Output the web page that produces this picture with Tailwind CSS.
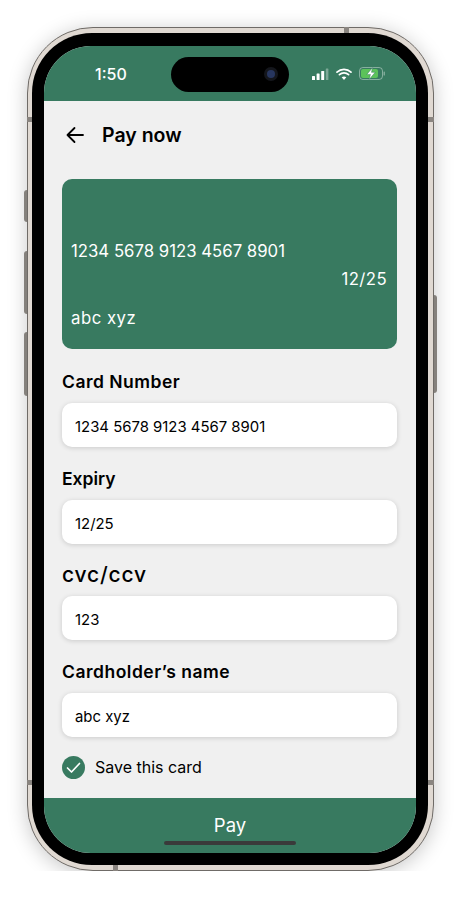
<!DOCTYPE html>
<html lang="en">
<head>
    <meta charset="UTF-8">
    <meta name="viewport" content="width=device-width, initial-scale=1.0">
    <title>Pay now</title>
    <script src="https://cdn.jsdelivr.net/npm/@tailwindcss/browser@4"></script>
</head>
<body class="bg-white font-['Inter',sans-serif] text-black">
    <div class="pt-[27px] pl-[27px]">
        <!-- Phone frame -->
        <div class="relative w-[407px] h-[844px] rounded-[66px] bg-[#e0d9d2] pt-[5px] pr-[5px] pb-[5px] pl-[4px] border border-[#6f6b67] shadow-[0_3px_20px_rgba(0,0,0,0.22)]">
            <!-- Side buttons -->
            <div class="absolute left-[-4px] top-[162px] w-[3px] h-[32px] bg-[#85817c] rounded-l-sm"></div>
            <div class="absolute left-[-4px] top-[223px] w-[3px] h-[63px] bg-[#85817c] rounded-l-sm"></div>
            <div class="absolute left-[-4px] top-[304px] w-[3px] h-[64px] bg-[#85817c] rounded-l-sm"></div>
            <div class="absolute right-[-4px] top-[267px] w-[3px] h-[98px] bg-[#85817c] rounded-r-sm"></div>
            <!-- Antenna bands -->
            <div class="absolute left-[-1px] top-[89px] w-[5px] h-[5px] bg-[#8a8580]"></div>
            <div class="absolute right-[-1px] top-[89px] w-[6px] h-[5px] bg-[#8a8580]"></div>
            <div class="absolute left-[-1px] top-[752px] w-[5px] h-[5px] bg-[#8a8580]"></div>
            <div class="absolute right-[-1px] top-[752px] w-[6px] h-[5px] bg-[#8a8580]"></div>
            <div class="absolute left-[316px] top-[-1px] w-[5px] h-[6px] bg-[#8a8580]"></div>
            <div class="absolute left-[85px] bottom-[-1px] w-[5px] h-[6px] bg-[#8a8580]"></div>

            <div class="h-full rounded-[60px] bg-black px-[12px] pt-[13px] pb-[12px]">
                <div class="relative flex h-full flex-col overflow-hidden rounded-[47px] bg-[#f0f0f0]">
                    <!-- Status bar -->
                    <div class="relative h-[55px] shrink-0 bg-[#387a60] text-white">
                        <span class="absolute left-[51px] top-[18px] text-[16px] leading-5 font-medium">1:50</span>
                        <div class="absolute left-[127px] top-[10.5px] flex h-[35px] w-[118px] items-center justify-end rounded-full bg-black pr-[11px]">
                            <div class="flex h-[14px] w-[14px] items-center justify-center rounded-full bg-[#14161c]">
                                <div class="h-[8px] w-[8px] rounded-full bg-[#27365f]"></div>
                            </div>
                        </div>
                        <div class="absolute left-[267px] top-[21px] flex items-center gap-[7px]">
                            <svg width="18" height="12" viewBox="0 0 18 12">
                                <rect x="1" y="8" width="3" height="4" rx="0.6" fill="#fff"/>
                                <rect x="5.6" y="5.5" width="3" height="6.5" rx="0.6" fill="#fff"/>
                                <rect x="10.2" y="3" width="3" height="9" rx="0.6" fill="#fff"/>
                                <rect x="14.8" y="0.5" width="2.6" height="11.5" rx="0.6" fill="#fff" fill-opacity="0.35"/>
                            </svg>
                            <svg width="16" height="12" viewBox="0 0 16 12">
                                <path d="M1 4.2C4.9.5 11.1.5 15 4.2" fill="none" stroke="#fff" stroke-width="1.7" stroke-linecap="round"/>
                                <path d="M3.4 6.7c2.6-2.4 6.6-2.4 9.2 0" fill="none" stroke="#fff" stroke-width="1.7" stroke-linecap="round"/>
                                <path d="M8 12 5.7 9.2c1.4-1.1 3.2-1.1 4.6 0z" fill="#fff"/>
                            </svg>
                            <svg width="26" height="13" viewBox="0 0 26 13">
                                <rect x="0.5" y="0.5" width="23" height="12" rx="3.4" fill="none" stroke="#fff" stroke-opacity="0.4"/>
                                <rect x="2" y="2" width="17" height="9" rx="2" fill="#5cc25a"/>
                                <rect x="24.6" y="4.5" width="1.2" height="4" rx="0.6" fill="#fff" fill-opacity="0.45"/>
                                <path d="M13.6 0.6 7.8 7.4h3.6l-1.2 5 6-7.1h-3.7z" fill="#fff" stroke="#387a60" stroke-width="0.5"/>
                            </svg>
                        </div>
                    </div>

                    <!-- Title row -->
                    <div class="flex h-[68px] shrink-0 items-center pl-[22px]">
                        <svg width="18" height="18" viewBox="0 0 18 18" fill="none" stroke="#000" stroke-width="1.8" stroke-linecap="round" stroke-linejoin="round">
                            <path d="M17 9H1.5M8.5 2 1.5 9l7 7"/>
                        </svg>
                        <h1 class="ml-[18px] text-[19.5px] leading-6 font-semibold">Pay now</h1>
                    </div>

                    <div class="flex-1 pl-[18px] pr-[19px] pt-[10px]">
                        <!-- Card preview -->
                        <div class="relative flex h-[170px] flex-col rounded-[10px] bg-[#387a60] pl-[9px] pr-[10px] text-[16.75px] text-white">
                            <span class="mt-[60px] leading-6">1234 5678 9123 4567 8901</span>
                            <span class="mt-[4px] self-end leading-6 tracking-[0.4px]">12/25</span>
                            <span class="mt-[15px] leading-6 tracking-[0.5px]">abc xyz</span>
                        </div>

                        <!-- Form -->
                        <form class="mt-[21px]">
                            <label class="block text-[17.5px] leading-6 font-semibold tracking-[0.5px]">Card Number</label>
                            <div class="mt-[9px] flex h-[44px] items-center rounded-[10px] bg-white pt-[4px] pl-[13px] text-[14.9px] shadow-[0_1px_5px_rgba(0,0,0,0.16)]">1234 5678 9123 4567 8901</div>

                            <label class="mt-[20px] block text-[17.5px] leading-6 font-semibold">Expiry</label>
                            <div class="mt-[9px] flex h-[44px] items-center rounded-[10px] bg-white pt-[4px] pl-[13px] text-[14.9px] shadow-[0_1px_5px_rgba(0,0,0,0.16)]">12/25</div>

                            <label class="mt-[19px] block text-[21px] leading-6 font-medium tracking-[0.8px]">cvc/ccv</label>
                            <div class="mt-[9px] flex h-[44px] items-center rounded-[10px] bg-white pt-[4px] pl-[13px] text-[14.9px] shadow-[0_1px_5px_rgba(0,0,0,0.16)]">123</div>

                            <label class="mt-[20px] block text-[17.5px] leading-6 font-semibold tracking-[0.5px]">Cardholder’s name</label>
                            <div class="mt-[9px] flex h-[44px] items-center rounded-[10px] bg-white pt-[4px] pl-[13px] text-[14.9px] shadow-[0_1px_5px_rgba(0,0,0,0.16)]">abc xyz</div>

                            <div class="mt-[18px] flex items-center gap-[10px]">
                                <svg width="23" height="23" viewBox="0 0 23 23">
                                    <circle cx="11.5" cy="11.5" r="11.5" fill="#387a60"/>
                                    <path d="M5.5 12l4 4 8-8.5" fill="none" stroke="#fff" stroke-width="1.7" stroke-linecap="round" stroke-linejoin="round"/>
                                </svg>
                                <span class="text-[16px]">Save this card</span>
                            </div>
                        </form>
                    </div>

                    <!-- Pay button -->
                    <div class="relative flex h-[55px] shrink-0 justify-center bg-[#387a60] pt-[15px] text-[18.5px] text-white">
                        <span class="leading-6">Pay</span>
                        <div class="absolute bottom-[8px] left-[120px] h-[4px] w-[132px] rounded-full bg-[#3a3a3a]"></div>
                    </div>
                </div>
            </div>
        </div>
    </div>
</body>
</html>
